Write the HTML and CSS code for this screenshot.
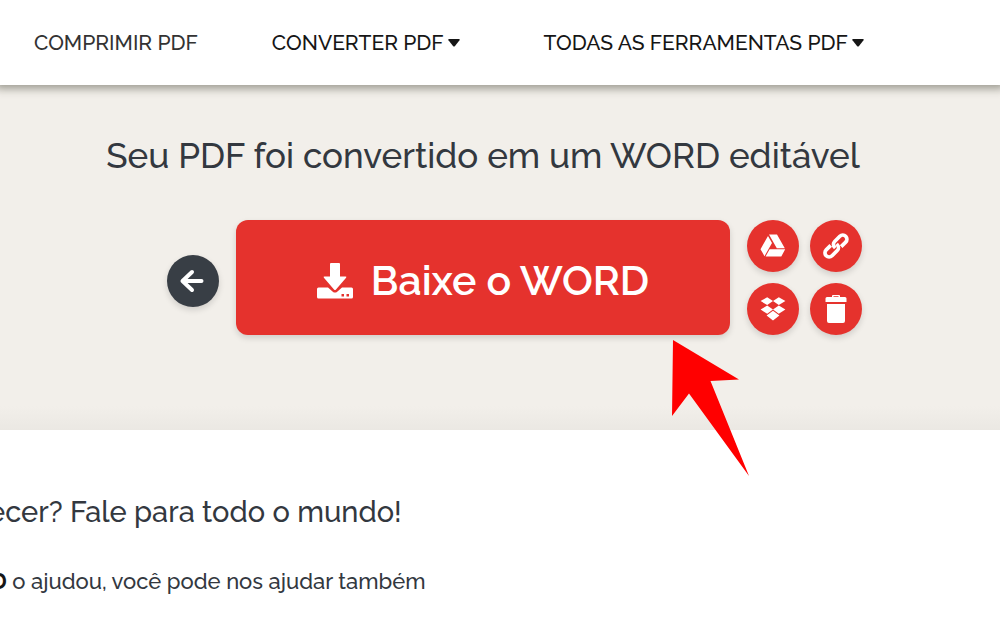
FILE: index.html
```html
<!DOCTYPE html>
<html lang="pt">
<head>
<meta charset="utf-8">
<meta name="viewport" content="width=device-width, initial-scale=1">
<title>Baixe o WORD</title>
<link rel="stylesheet" href="styles.css">
</head>
<body>
<header class="topbar">
  <nav class="nav">
    <a class="nav-link nav-link-soft" href="#">COMPRIMIR PDF</a>
    <a class="nav-link" href="#">CONVERTER PDF<svg class="caret" viewBox="0 0 12 8" aria-hidden="true"><path d="M1 0h10q1.200 .2 .5 1.200L7 7Q6 8 5 7L.5 1.200Q-.2 .2 1 0z"/></svg></a>
    <a class="nav-link" href="#">TODAS AS FERRAMENTAS PDF<svg class="caret" viewBox="0 0 12 8" aria-hidden="true"><path d="M1 0h10q1.200 .2 .5 1.200L7 7Q6 8 5 7L.5 1.200Q-.2 .2 1 0z"/></svg></a>
  </nav>
</header>
<main>
  <section class="hero">
    <h1 class="hero-title">Seu PDF foi convertido em um WORD editável</h1>
    <div class="actions">
      <button class="round round-dark" type="button" aria-label="Voltar">
        <svg class="icon" viewBox="0 0 26 26" aria-hidden="true"><path class="line" d="M21.500 13H3M12 4L2.500 13L12 22"/></svg>
      </button>
      <button class="download" type="button">
        <svg class="download-icon" viewBox="0 0 36 36" aria-hidden="true"><path d="M14 0h8q1 0 1 1v12.500h5.500q1.500 0 .6 1.300L19 26.500q-1 1.200-2 0L6.900 14.800q-.9-1.300.6-1.300H13V1q0-1 1-1z"/><path fill-rule="evenodd" d="M1.500 24.500H11l4.800 4.200q2.200 1.800 4.400 0l4.800-4.200h9.500q1.500 0 1.500 1.500v8q0 1.500-1.500 1.500h-33Q0 35.500 0 34v-8q0-1.500 1.500-1.500zM24.500 31v2.500H27V31zM29.500 31v2.500H32V31z"/></svg>
        <span>Baixe o WORD</span>
      </button>
      <div class="options">
        <button class="round" type="button" aria-label="Salvar no Google Drive">
          <svg class="icon" viewBox="0 0 26 26" aria-hidden="true"><path d="M9 1.500h8l7.800 13.700h-8zM8 3l4 7L4.500 23.200 0.500 16.200zM9.600 16.300H25.200L21.300 23.500H5.600z"/></svg>
        </button>
        <button class="round" type="button" aria-label="Copiar link">
          <svg class="icon" viewBox="0 0 26 26" aria-hidden="true"><g class="chain" transform="rotate(-45 13 13) translate(1 1) scale(.92)"><path d="M9.500 8.500H2.500a4.500 4.500 0 0 0-4.500 4.500v0a4.500 4.500 0 0 0 4.500 4.500h8a4.500 4.500 0 0 0 4.500-4.500v-1"/><path d="M16.500 17.500h7a4.500 4.500 0 0 0 4.500-4.500v0a4.500 4.500 0 0 0-4.500-4.500h-8a4.500 4.500 0 0 0-4.500 4.500v1"/></g></svg>
        </button>
        <button class="round" type="button" aria-label="Salvar no Dropbox">
          <svg class="icon" viewBox="0 0 26 26" aria-hidden="true"><path d="M7.200 1.200L13 5.100 7.200 9 .6 5.100zM18.800 1.200L25.400 5.100 18.800 9 13 5.100zM7.200 9.500L13 13.600 7.200 17.800.6 13.600zM18.800 9.500L25.400 13.600 18.800 17.800 13 13.600zM13 14.800L19.400 19.600 13 24.500 6.600 19.600z"/></svg>
        </button>
        <button class="round" type="button" aria-label="Excluir">
          <svg class="icon icon-tall" viewBox="0 0 22 28" aria-hidden="true"><path fill-rule="evenodd" d="M7 2V1q0-1 1-1h6q1 0 1 1v1h5q1.500 0 1.500 1.500V7H.5V3.500Q.5 2 2 2zM8.500 1.200V2h5v-.8zM2 9h18v17q0 2-2 2H4q-2 0-2-2z"/></svg>
        </button>
      </div>
    </div>
    <svg class="pointer" viewBox="0 0 78 136" aria-hidden="true"><path d="M1 0L67 39.500 38.500 41 77 136 17 53.500 0 76z"/></svg>
  </section>
  <section class="share">
    <h2 class="share-title">ecer? Fale para todo o mundo!</h2>
    <p class="share-text"><strong>D</strong> o ajudou, você pode nos ajudar também</p>
  </section>
</main>
</body>
</html>
```

FILE: styles.css
```css
* { box-sizing: border-box; }

body {
  margin: 0;
  overflow-x: hidden;
  background: #fff;
  color: #33383f;
  font-family: Raleway, Lato, "Open Sans", sans-serif;
}

.topbar {
  position: relative;
  z-index: 1;
  padding: 29px 34px 28px;
  background: #fff;
  box-shadow: 0 0 8px 4px rgba(60, 60, 45, .45);
}

.nav { display: flex; white-space: nowrap; }

.nav-link {
  display: flex;
  align-items: center;
  gap: 4px;
  margin-right: 84px;
  color: #161616;
  font-size: 21px;
  font-weight: 500;
  line-height: 28px;
  text-decoration: none;
}

.nav-link-soft { margin-right: 74px; color: #333; }

.caret { width: 12px; height: 8px; }

.hero {
  position: relative;
  padding: 47px 0 95px;
  background: linear-gradient(#f2efea calc(100% - 24px), #ebe8e3);
}

.hero-title {
  margin: 0 34px 40px 0;
  font-size: 35px;
  font-weight: 500;
  line-height: 48px;
  text-align: center;
}

.actions {
  display: flex;
  justify-content: center;
  align-items: center;
  gap: 17px;
  padding-left: 29px;
}

button {
  border: 0;
  padding: 0;
  color: #fff;
  font-family: inherit;
  cursor: pointer;
}

svg { display: block; fill: currentColor; }

.round {
  display: flex;
  align-items: center;
  justify-content: center;
  width: 52px;
  height: 52px;
  border-radius: 50%;
  background: #e5322d;
  box-shadow: 0 3px 6px rgba(0, 0, 0, .14);
}

.round-dark { margin-top: 6px; background: #383e45; }

.icon { width: 26px; height: 26px; overflow: visible; }
.icon-tall { width: 22px; height: 28px; }

.line {
  fill: none;
  stroke: currentColor;
  stroke-width: 4;
  stroke-linecap: round;
  stroke-linejoin: round;
}

.chain { fill: none; stroke: currentColor; stroke-width: 4; }

.download {
  display: flex;
  align-items: center;
  justify-content: center;
  gap: 18px;
  width: 494px;
  padding: 34px 0 27px;
  border-radius: 12px;
  background: #e5322d;
  box-shadow: 0 3px 6px rgba(0, 0, 0, .14);
  font-size: 41px;
  font-weight: 600;
  line-height: 54px;
}

.download-icon { width: 36px; height: 36px; }

.options {
  display: grid;
  grid-template-columns: 52px 52px;
  gap: 11px;
}

.pointer {
  position: absolute;
  z-index: 1;
  left: 672px;
  top: 255px;
  width: 78px;
  height: 136px;
  color: #f00;
}

.share { padding: 62px 0 32px; white-space: nowrap; }

.share-title {
  margin: 0 0 33px -12px;
  font-size: 29px;
  font-weight: 500;
  line-height: 40px;
}

.share-text {
  margin: 0 0 0 -9px;
  font-size: 22px;
  font-weight: 500;
  line-height: 32px;
}

.share-text strong { color: #161616; }
```
